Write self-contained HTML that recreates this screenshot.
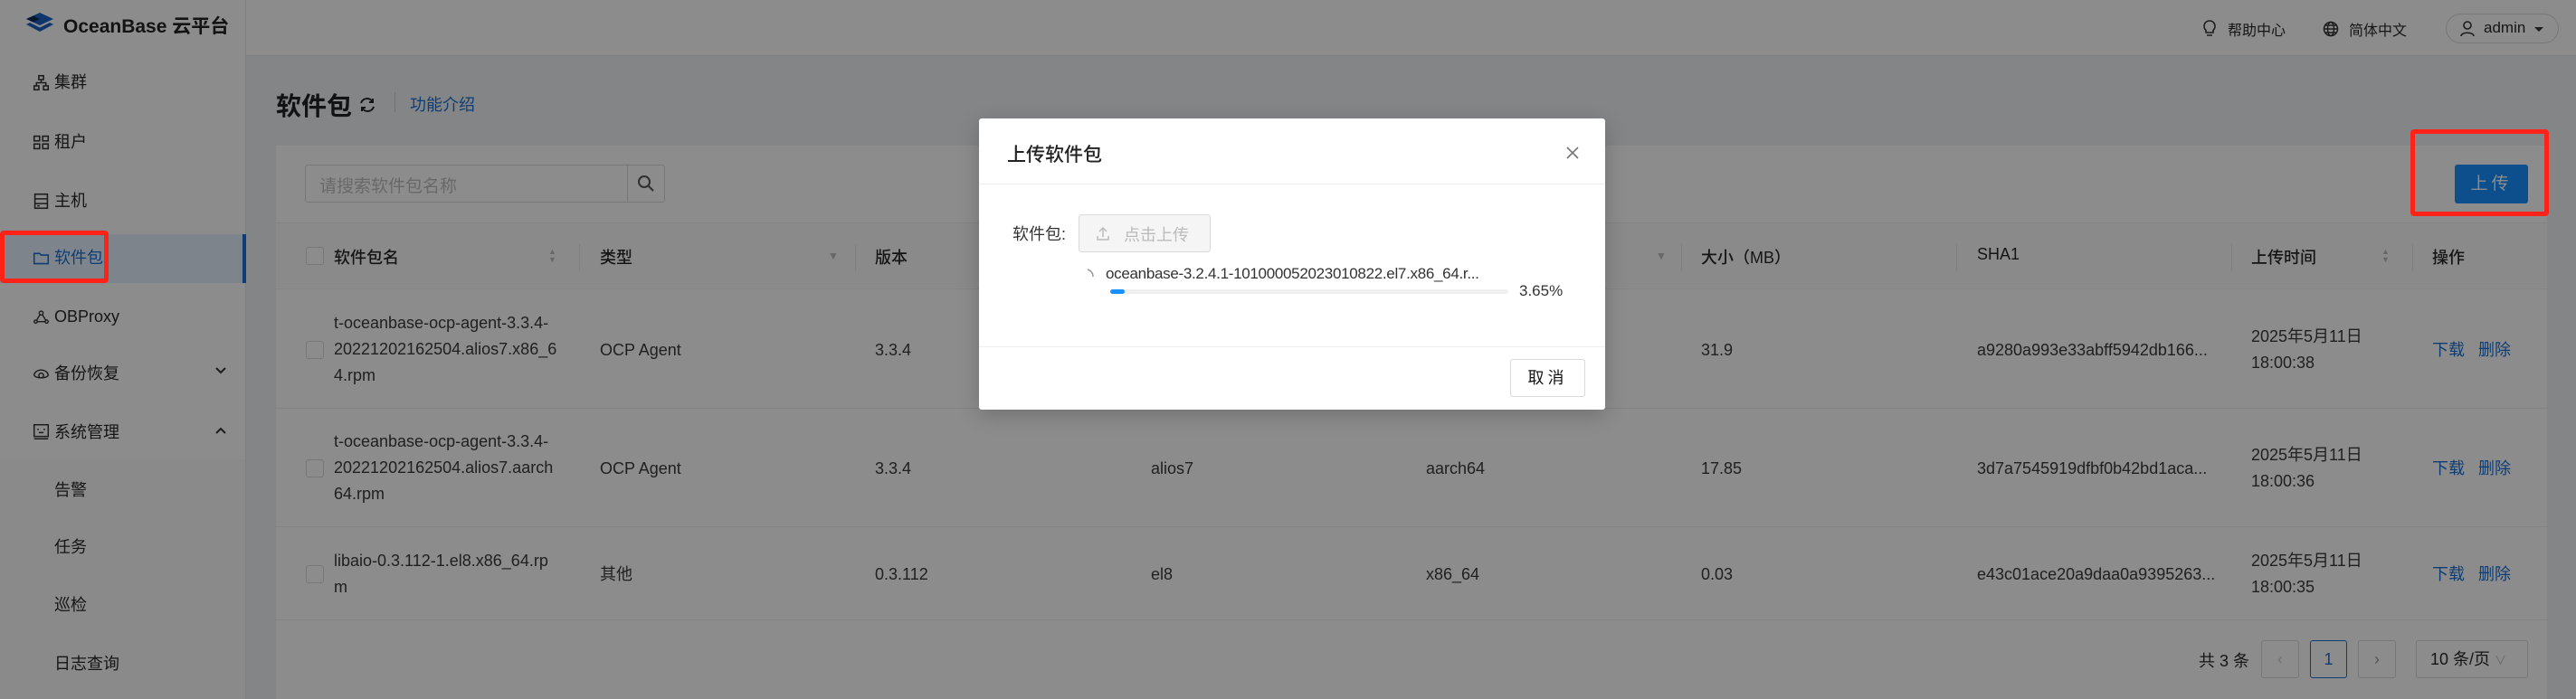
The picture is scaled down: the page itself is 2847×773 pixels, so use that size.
<!DOCTYPE html>
<html style="width:2847px;height:773px;overflow:hidden;background:#848587"><head><meta charset="utf-8"><style>
*{box-sizing:border-box;margin:0;padding:0}
body{width:2847px;height:773px;overflow:hidden;position:relative;background:#848587;font-family:"Liberation Sans","Noto Sans CJK SC",sans-serif;color:#151515;font-size:18px}
.a{position:absolute;white-space:nowrap}
.side{left:0;top:0;width:272px;height:773px;background:#8c8c8c;border-right:1px solid #808080}
.hdr{left:272px;top:0;width:2575px;height:62px;background:#8c8c8c;border-bottom:1px solid #808080}
.mi{left:60px;font-size:18px;line-height:24px;color:#151515}
.ic{left:36px;width:19px;height:19px}
.card{left:305px;top:161px;width:2510px;height:612px;background:#8c8c8c}
.th{font-size:18px;font-weight:500;color:#151515}
.td{font-size:18px;line-height:29px;color:#202020}
.cb{width:20px;height:20px;border:1px solid #777;border-radius:3px;background:#8c8c8c;left:338px}
.hl{height:1px;background:#838383;left:305px;width:2510px}
.sep{width:1px;height:30px;background:#808080;top:270px}
.lk{color:#0e3d76}
.modal{left:1082px;top:131px;width:692px;height:322px;background:#fff;border-radius:3px;box-shadow:0 6px 24px rgba(0,0,0,.2)}
.red{border:5px solid #ff2219;border-radius:4px}
</style></head><body>
<div class="a side"></div>
<svg class="a" style="left:27px;top:14px" width="34" height="24" viewBox="0 0 34 24"><path d="M2 7 L17 0 L32 7 L17 14Z" fill="#0e366c"/><path d="M2 7 L10 3.5 L17 7 L10 10.5Z" fill="#061731"/><path d="M2 13 L6 11 L17 16.5 L28 11 L32 13 L17 21Z" fill="#0e366c"/></svg>
<div class="a" style="left:70px;top:13px;font-size:21px;font-weight:bold;color:#131313">OceanBase 云平台</div>
<svg class="a ic" style="top:82px" viewBox="0 0 22 22" fill="none" stroke="#1c1c1c" stroke-width="1.8"><rect x="8" y="2" width="6" height="5"/><rect x="2" y="15" width="6" height="5"/><rect x="14" y="15" width="6" height="5"/><path d="M11 7v4M5 15v-4h12v4"/></svg>
<div class="a mi" style="top:79px">集群</div>
<svg class="a ic" style="top:148px" viewBox="0 0 22 22" fill="none" stroke="#1c1c1c" stroke-width="1.8"><rect x="2" y="3" width="7" height="6"/><rect x="13" y="3" width="7" height="6"/><rect x="2" y="13" width="7" height="6"/><rect x="13" y="13" width="7" height="6"/></svg>
<div class="a mi" style="top:145px">租户</div>
<svg class="a ic" style="top:213px" viewBox="0 0 22 22" fill="none" stroke="#1c1c1c" stroke-width="1.8"><rect x="3" y="2" width="16" height="18"/><path d="M3 8h16M3 14h16M6 17h3"/></svg>
<div class="a mi" style="top:210px">主机</div>
<div class="a" style="left:0;top:259px;width:272px;height:54px;background:#7e848b;border-right:4px solid #0e3d76"></div>
<svg class="a ic" style="top:276px" viewBox="0 0 22 22" fill="none" stroke="#0e3d76" stroke-width="1.8"><path d="M2 5h7l2 2h9v11H2z"/></svg>
<div class="a mi" style="top:273px;color:#0e3d76">软件包</div>
<svg class="a ic" style="top:341px" viewBox="0 0 22 22" fill="none" stroke="#1c1c1c" stroke-width="1.6"><circle cx="11" cy="6" r="2.5"/><circle cx="4" cy="17" r="2"/><circle cx="18" cy="17" r="2"/><path d="M9.5 8L5 15.5M12.5 8L17 15.5M6 17h10"/></svg>
<div class="a mi" style="top:338px">OBProxy</div>
<svg class="a ic" style="top:404px" viewBox="0 0 22 22" fill="none" stroke="#1c1c1c" stroke-width="1.7"><path d="M2 13a9 7 0 0118 0M2 13c3 4 15 4 18 0"/><circle cx="11" cy="13" r="3"/></svg>
<div class="a mi" style="top:401px">备份恢复</div>
<svg class="a" style="left:237px;top:405px" width="14" height="10" viewBox="0 0 14 10" fill="none" stroke="#1c1c1c" stroke-width="2"><path d="M2 2l5 5 5-5"/></svg>
<svg class="a ic" style="top:468px" viewBox="0 0 22 22" fill="none" stroke="#1c1c1c" stroke-width="1.7"><rect x="2" y="2" width="18" height="15"/><path d="M2 20h18M7 7v2M15 7v2M8 12h6"/></svg>
<div class="a mi" style="top:466px">系统管理</div>
<svg class="a" style="left:237px;top:471px" width="14" height="10" viewBox="0 0 14 10" fill="none" stroke="#1c1c1c" stroke-width="2"><path d="M2 8l5-5 5 5"/></svg>
<div class="a" style="left:0;top:508px;width:271px;height:265px;background:#8a8a8a"></div>
<div class="a mi" style="top:530px">告警</div>
<div class="a mi" style="top:593px">任务</div>
<div class="a mi" style="top:657px">巡检</div>
<div class="a mi" style="top:722px">日志查询</div>

<div class="a hdr"></div>
<svg class="a" style="left:2434px;top:22px" width="16" height="20" viewBox="0 0 16 20" fill="none" stroke="#1c1c1c" stroke-width="1.6"><path d="M8 1a6 6 0 00-4 10.5V14h8v-2.5A6 6 0 008 1zM5 17h6"/></svg>
<div class="a" style="left:2462px;top:20px;font-size:16px">帮助中心</div>
<svg class="a" style="left:2567px;top:23px" width="18" height="18" viewBox="0 0 18 18" fill="none" stroke="#1c1c1c" stroke-width="1.5"><circle cx="9" cy="9" r="7.5"/><ellipse cx="9" cy="9" rx="3.5" ry="7.5"/><path d="M1.5 9h15M3 5h12M3 13h12"/></svg>
<div class="a" style="left:2596px;top:20px;font-size:16px">简体中文</div>
<div class="a" style="left:2703px;top:15px;width:125px;height:33px;border:1px solid #777;border-radius:17px"></div>
<svg class="a" style="left:2719px;top:23px" width="16" height="18" viewBox="0 0 16 18" fill="none" stroke="#1c1c1c" stroke-width="1.6"><circle cx="8" cy="5" r="4"/><path d="M1 17c0-5 14-5 14 0"/></svg>
<div class="a" style="left:2745px;top:21px;font-size:17px">admin</div>
<div class="a" style="left:2801px;top:30px;border:5px solid transparent;border-top:5px solid #1c1c1c"></div>

<div class="a" style="left:305px;top:96px;font-size:28px;font-weight:bold;color:#131313">软件包</div>
<svg class="a" style="left:396px;top:106px" width="20" height="20" viewBox="0 0 20 20" fill="none" stroke="#131313" stroke-width="2"><path d="M3 8a7 7 0 0113-1M17 12a7 7 0 01-13 1"/><path d="M16 3v4h-4M4 17v-4h4"/></svg>
<div class="a" style="left:436px;top:102px;width:1px;height:22px;background:#707070"></div>
<div class="a" style="left:453px;top:102px;font-size:18px;color:#0e3d76">功能介绍</div>

<div class="a card"></div>
<div class="a" style="left:337px;top:182px;width:357px;height:42px;border:1px solid #777;border-radius:3px 0 0 3px"></div>
<div class="a" style="left:353px;top:191px;font-size:19px;color:#696969">请搜索软件包名称</div>
<div class="a" style="left:693px;top:182px;width:42px;height:42px;border:1px solid #777;border-radius:0 3px 3px 0"></div>
<svg class="a" style="left:704px;top:193px" width="20" height="20" viewBox="0 0 20 20" fill="none" stroke="#2f2f2f" stroke-width="2"><circle cx="8" cy="8" r="6"/><path d="M12.5 12.5L18 18"/></svg>
<div class="a" style="left:2713px;top:182px;width:81px;height:43px;background:#0d4f8c;border-radius:3px;color:#8c8c8c;font-size:19px;text-align:center;line-height:43px;letter-spacing:4px">上传</div>

<div class="a hl" style="top:246px"></div>
<div class="a" style="left:305px;top:247px;width:2510px;height:72px;background:#8a8a8a"></div>
<div class="a hl" style="top:319px"></div>
<div class="a cb" style="top:273px"></div>
<div class="a th" style="left:369px;top:271px">软件包名</div>
<div class="a" style="left:606px;top:274px;font-size:9px;line-height:9px;color:#676767">▲<br>▼</div>
<div class="a sep" style="left:640px"></div>
<div class="a th" style="left:663px;top:271px">类型</div>
<div class="a" style="left:915px;top:276px;font-size:12px;color:#676767">▼</div>
<div class="a sep" style="left:945px"></div>
<div class="a th" style="left:967px;top:271px">版本</div>
<div class="a" style="left:1830px;top:276px;font-size:12px;color:#676767">▼</div>
<div class="a sep" style="left:1858px"></div>
<div class="a th" style="left:1880px;top:271px">大小（MB）</div>
<div class="a sep" style="left:2162px"></div>
<div class="a th" style="left:2185px;top:271px">SHA1</div>
<div class="a sep" style="left:2466px"></div>
<div class="a th" style="left:2488px;top:271px">上传时间</div>
<div class="a" style="left:2632px;top:274px;font-size:9px;line-height:9px;color:#676767">▲<br>▼</div>
<div class="a sep" style="left:2666px"></div>
<div class="a th" style="left:2688px;top:271px">操作</div>

<div class="a cb" style="top:377px"></div>
<div class="a td" style="left:369px;top:343px">t-oceanbase-ocp-agent-3.3.4-<br>20221202162504.alios7.x86_6<br>4.rpm</div>
<div class="a td" style="left:663px;top:373px">OCP Agent</div>
<div class="a td" style="left:967px;top:373px">3.3.4</div>
<div class="a td" style="left:1880px;top:373px">31.9</div>
<div class="a td" style="left:2185px;top:373px">a9280a993e33abff5942db166...</div>
<div class="a td" style="left:2488px;top:358px">2025年5月11日<br>18:00:38</div>
<div class="a td lk" style="left:2688px;top:373px">下载&nbsp;&nbsp;&nbsp;删除</div>
<div class="a hl" style="top:451px"></div>
<div class="a cb" style="top:508px"></div>
<div class="a td" style="left:369px;top:474px">t-oceanbase-ocp-agent-3.3.4-<br>20221202162504.alios7.aarch<br>64.rpm</div>
<div class="a td" style="left:663px;top:504px">OCP Agent</div>
<div class="a td" style="left:967px;top:504px">3.3.4</div>
<div class="a td" style="left:1272px;top:504px">alios7</div>
<div class="a td" style="left:1576px;top:504px">aarch64</div>
<div class="a td" style="left:1880px;top:504px">17.85</div>
<div class="a td" style="left:2185px;top:504px">3d7a7545919dfbf0b42bd1aca...</div>
<div class="a td" style="left:2488px;top:489px">2025年5月11日<br>18:00:36</div>
<div class="a td lk" style="left:2688px;top:504px">下载&nbsp;&nbsp;&nbsp;删除</div>
<div class="a hl" style="top:582px"></div>
<div class="a cb" style="top:625px"></div>
<div class="a td" style="left:369px;top:606px">libaio-0.3.112-1.el8.x86_64.rp<br>m</div>
<div class="a td" style="left:663px;top:621px">其他</div>
<div class="a td" style="left:967px;top:621px">0.3.112</div>
<div class="a td" style="left:1272px;top:621px">el8</div>
<div class="a td" style="left:1576px;top:621px">x86_64</div>
<div class="a td" style="left:1880px;top:621px">0.03</div>
<div class="a td" style="left:2185px;top:621px">e43c01ace20a9daa0a9395263...</div>
<div class="a td" style="left:2488px;top:606px">2025年5月11日<br>18:00:35</div>
<div class="a td lk" style="left:2688px;top:621px">下载&nbsp;&nbsp;&nbsp;删除</div>
<div class="a hl" style="top:685px"></div>
<div class="a" style="left:2430px;top:717px;font-size:18px">共 3 条</div>
<div class="a" style="left:2499px;top:708px;width:42px;height:42px;border:1px solid #777;border-radius:3px;text-align:center;line-height:40px;color:#707070">‹</div>
<div class="a" style="left:2553px;top:708px;width:41px;height:42px;border:1px solid #0e3d76;border-radius:3px;text-align:center;line-height:40px;color:#0e3d76">1</div>
<div class="a" style="left:2606px;top:708px;width:42px;height:42px;border:1px solid #777;border-radius:3px;text-align:center;line-height:40px;color:#545454">›</div>
<div class="a" style="left:2670px;top:708px;width:124px;height:42px;border:1px solid #777;border-radius:3px;padding-left:15px;line-height:40px">10 条/页 <span style="color:#676767;font-size:13px">∨</span></div>

<div class="a red" style="left:0;top:255px;width:120px;height:58px"></div>
<div class="a red" style="left:2664px;top:143px;width:153px;height:96px"></div>

<div class="a modal"></div>
<div class="a" style="left:1113px;top:155px;font-size:21px;font-weight:500;color:#222">上传软件包</div>
<svg class="a" style="left:1730px;top:161px" width="16" height="16" viewBox="0 0 16 16" stroke="#777" stroke-width="1.6"><path d="M2 2l12 12M14 2L2 14"/></svg>
<div class="a" style="left:1082px;top:203px;width:692px;height:1px;background:#eee"></div>
<div class="a" style="left:1119px;top:245px;font-size:18px;color:#333">软件包:</div>
<div class="a" style="left:1192px;top:237px;width:146px;height:42px;border:1px solid #d9d9d9;border-radius:3px;background:#f5f5f5"></div>
<svg class="a" style="left:1212px;top:250px" width="14" height="16" viewBox="0 0 14 16" fill="none" stroke="#bbb" stroke-width="1.5"><path d="M7 12V2M3 6l4-4 4 4M1 11v4h12v-4"/></svg>
<div class="a" style="left:1242px;top:246px;font-size:18px;color:#bbb">点击上传</div>
<svg class="a" style="left:1200px;top:296px" width="14" height="16" viewBox="0 0 14 16" fill="none" stroke="#999" stroke-width="1.5"><path d="M2 2a8 8 0 016 8"/></svg>
<div class="a" style="left:1222px;top:293px;font-size:17px;color:#333;letter-spacing:-0.3px">oceanbase-3.2.4.1-101000052023010822.el7.x86_64.r...</div>
<div class="a" style="left:1227px;top:320px;width:440px;height:5px;background:#f0f0f0;border-radius:3px"></div>
<div class="a" style="left:1227px;top:320px;width:16px;height:5px;background:#1890ff;border-radius:3px"></div>
<div class="a" style="left:1679px;top:312px;font-size:17px;color:#333">3.65%</div>
<div class="a" style="left:1082px;top:383px;width:692px;height:1px;background:#eee"></div>
<div class="a" style="left:1669px;top:397px;width:83px;height:42px;border:1px solid #d9d9d9;border-radius:3px;text-align:center;line-height:40px;font-size:18px;letter-spacing:4px">取消</div>
</body></html>
